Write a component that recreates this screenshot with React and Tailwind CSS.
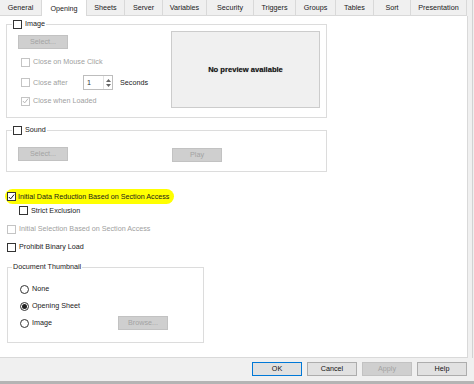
import React from 'react';

const TABS = [
  { label: 'General', w: 'w-[42px]' },
  { label: 'Opening', w: 'w-[45px]', active: true },
  { label: 'Sheets', w: 'w-[38px]' },
  { label: 'Server', w: 'w-[38px]' },
  { label: 'Variables', w: 'w-[44px]' },
  { label: 'Security', w: 'w-[47px]' },
  { label: 'Triggers', w: 'w-[42px]' },
  { label: 'Groups', w: 'w-[40px]' },
  { label: 'Tables', w: 'w-[38px]' },
  { label: 'Sort', w: 'w-[37px]' },
  { label: 'Presentation', w: 'w-[56px]' },
];

function Check({ checked, disabled }) {
  return (
    <span
      className={
        'flex h-[9px] w-[9px] shrink-0 items-center justify-center border bg-white ' +
        (disabled ? 'border-[#c4c4c4]' : 'border-[#333333]')
      }
    >
      {checked && (
        <svg width="8" height="8" viewBox="0 0 8 8">
          <polyline
            points="1,4 3,6.2 7,1.2"
            fill="none"
            stroke={disabled ? '#b4b4b4' : '#111'}
            strokeWidth="1.1"
          />
        </svg>
      )}
    </span>
  );
}

function Radio({ checked }) {
  return (
    <span className="flex h-[9px] w-[9px] shrink-0 items-center justify-center rounded-full border border-[#333333] bg-white">
      {checked && <span className="h-[5px] w-[5px] rounded-full bg-[#222]" />}
    </span>
  );
}

function Btn({ children, disabled, primary, className = '' }) {
  return (
    <div
      className={
        'flex h-[14px] w-[50px] items-center justify-center border ' +
        (disabled
          ? 'border-[#c2c2c2] bg-[#cfcfcf] text-[#a3a3a3] '
          : primary
          ? 'border-[#0078d7] bg-[#e1e1e1] text-[#111] '
          : 'border-[#adadad] bg-[#e1e1e1] text-[#111] ') +
        className
      }
    >
      {children}
    </div>
  );
}

function Row({ children, className = '' }) {
  return <div className={'flex items-center gap-[3px] ' + className}>{children}</div>;
}

export default function App() {
  return (
    <div className="flex h-[384px] w-[474px] flex-col overflow-hidden bg-[#f0f0f0] font-['Liberation_Sans',Arial,sans-serif] text-[7.2px] leading-none text-[#1a1a1a]">
      <div className="flex h-[358px]">
        <div className="flex w-[468px] flex-col">
          {/* tabs */}
          <div className="flex h-[16px]">
            {TABS.map(t => (
              <div
                key={t.label}
                className={
                  'flex items-center justify-center border-r border-[#d9d9d9] pt-[1px] ' +
                  t.w +
                  (t.active ? ' bg-white' : ' border-b bg-[#f0f0f0]')
                }
              >
                {t.label}
              </div>
            ))}
          </div>

          {/* panel */}
          <div className="flex-1 border-r border-b border-[#d9d9d9] bg-white pt-[3px]">
            {/* Image */}
            <fieldset className="ml-[6px] w-[321px] border border-[#dcdcdc]">
              <legend className="ml-[5px] flex h-[10px] items-center gap-[3px] px-[1px]">
                <Check />
                <span>Image</span>
              </legend>
              <div className="flex">
                <div className="flex flex-col pb-[10px] pl-[11px]">
                  <Btn disabled className="mt-[6px]">Select...</Btn>
                  <Row className="mt-[7px] h-[12px] pl-[3px] text-[#a0a0a0]">
                    <Check disabled />
                    <span>Close on Mouse Click</span>
                  </Row>
                  <Row className="mt-[7px] h-[15px] pl-[3px]">
                    <Check disabled />
                    <span className="w-[47px] text-[#a0a0a0]">Close after</span>
                    <div className="flex h-[15px] w-[30px] items-center border border-[#bdbdbd] bg-white">
                      <span className="flex-1 pl-[3px] text-[#333]">1</span>
                      <div className="flex h-full w-[9px] flex-col items-center justify-center gap-[2px] border-l border-[#e3e3e3]">
                        <svg width="5" height="3" viewBox="0 0 5 3"><polygon points="0,3 2.5,0 5,3" fill="#666" /></svg>
                        <svg width="5" height="3" viewBox="0 0 5 3"><polygon points="0,0 2.5,3 5,0" fill="#666" /></svg>
                      </div>
                    </div>
                    <span className="ml-[4px]">Seconds</span>
                  </Row>
                  <Row className="mt-[5px] h-[12px] pl-[3px] text-[#a0a0a0]">
                    <Check checked disabled />
                    <span>Close when Loaded</span>
                  </Row>
                </div>
                <div className="ml-auto mr-[6px] mt-[2px] flex h-[77px] w-[149px] items-center justify-center border border-[#cccccc] bg-[#f0f0f0]">
                  <span className="text-[7.6px] font-bold text-[#111] [text-shadow:0_0_1px_rgba(0,0,0,0.35)]">
                    No preview available
                  </span>
                </div>
              </div>
            </fieldset>

            {/* Sound */}
            <fieldset className="ml-[6px] mt-[7px] w-[321px] border border-[#dcdcdc]">
              <legend className="ml-[5px] flex h-[10px] items-center gap-[3px] px-[1px]">
                <Check />
                <span>Sound</span>
              </legend>
              <div className="flex items-start pb-[9px] pl-[11px]">
                <Btn disabled className="mt-[12px]">Select...</Btn>
                <Btn disabled className="ml-[104px] mt-[13px]">Play</Btn>
              </div>
            </fieldset>

            {/* options */}
            <div className="ml-[5px] mt-[17px] flex h-[15px] w-[169px] items-center gap-[2px] rounded-full bg-[#ffff00] pl-[2px]">
              <Check checked />
              <span>Initial Data Reduction Based on Section Access</span>
            </div>
            <Row className="h-[13px] pl-[19px]">
              <Check />
              <span>Strict Exclusion</span>
            </Row>
            <Row className="mt-[6px] h-[12px] pl-[7px] text-[#a0a0a0]">
              <Check disabled />
              <span>Initial Selection Based on Section Access</span>
            </Row>
            <Row className="mt-[6px] h-[12px] pl-[7px]">
              <Check />
              <span>Prohibit Binary Load</span>
            </Row>

            {/* Document Thumbnail */}
            <fieldset className="ml-[7px] mt-[9px] w-[197px] border border-[#dcdcdc]">
              <legend className="ml-[4px] flex h-[10px] items-center px-[1px]">Document Thumbnail</legend>
              <div className="flex flex-col pb-[12px] pl-[12px]">
                <Row className="mt-[11px] h-[12px]">
                  <Radio />
                  <span>None</span>
                </Row>
                <Row className="mt-[5px] h-[12px]">
                  <Radio checked />
                  <span>Opening Sheet</span>
                </Row>
                <div className="mt-[4px] flex h-[14px] items-center">
                  <div className="flex w-[98px] items-center gap-[3px]">
                    <Radio />
                    <span>Image</span>
                  </div>
                  <Btn disabled>Browse...</Btn>
                </div>
              </div>
            </fieldset>
          </div>
        </div>
        <div className="flex w-[6px] justify-end pr-[1px]">
          <div className="w-[1px] bg-[#d2d2d2]" />
        </div>
      </div>

      {/* bottom buttons */}
      <div className="flex h-[23px] justify-end gap-[5px] pr-[7px] pt-[4px]">
        <Btn primary>OK</Btn>
        <Btn>Cancel</Btn>
        <Btn disabled>Apply</Btn>
        <Btn>Help</Btn>
      </div>
      <div className="h-[3px] bg-[#b4b4b4]" />
    </div>
  );
}
